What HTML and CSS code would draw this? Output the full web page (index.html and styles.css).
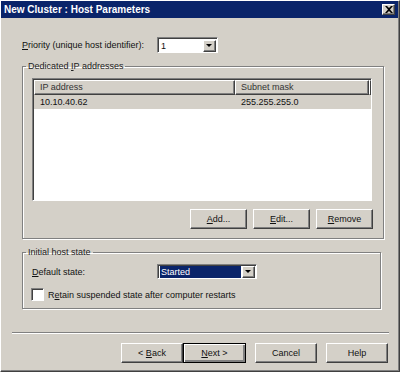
FILE: index.html
```html
<!DOCTYPE html>
<html lang="en">
<head>
    <meta charset="UTF-8">
    <title>New Cluster : Host Parameters</title>
    <link rel="stylesheet" href="styles.css">
</head>
<body>
    <div class="window">
        <div class="titlebar">
            <span class="title">New Cluster : Host Parameters</span>
            <span class="close-btn">
                <svg width="8" height="7" viewBox="0 0 8 7"><path d="M0 0h2l2 2 2-2h2L5 3.5 8 7H6L4 5 2 7H0l3-3.5z" fill="#000"/></svg>
            </span>
        </div>
        <div class="content">
            <div class="field-row priority-row">
                <label class="field-label"><u>P</u>riority (unique host identifier):</label>
                <div class="combo combo-small">
                    <span class="combo-text">1</span>
                    <span class="combo-arrow"></span>
                </div>
            </div>

            <fieldset class="group group-ip">
                <legend>Dedicated <u>I</u>P addresses</legend>
                <div class="listview">
                    <div class="list-header">
                        <div class="col col-ip">IP address</div>
                        <div class="col col-mask">Subnet mask</div>
                        <div class="col col-rest"></div>
                    </div>
                    <div class="list-row selected">
                        <div class="cell col-ip">10.10.40.62</div>
                        <div class="cell col-mask">255.255.255.0</div>
                    </div>
                </div>
                <div class="button-row list-buttons">
                    <button class="btn btn-small"><u>A</u>dd...</button>
                    <button class="btn btn-small"><u>E</u>dit...</button>
                    <button class="btn btn-small"><u>R</u>emove</button>
                </div>
            </fieldset>

            <fieldset class="group group-state">
                <legend>Initial host state</legend>
                <div class="field-row state-row">
                    <label class="field-label state-label"><u>D</u>efault state:</label>
                    <div class="combo combo-wide">
                        <span class="combo-text selected-text">Started</span>
                        <span class="combo-arrow"></span>
                    </div>
                </div>
                <div class="check-row">
                    <span class="checkbox"></span>
                    <span class="check-label">R<u>e</u>tain suspended state after computer restarts</span>
                </div>
            </fieldset>

            <div class="separator"></div>

            <div class="button-row wizard-buttons">
                <button class="btn btn-wide">&lt; <u>B</u>ack</button>
                <button class="btn btn-wide btn-default"><u>N</u>ext &gt;</button>
                <button class="btn btn-wide btn-gap">Cancel</button>
                <button class="btn btn-wide btn-gap">Help</button>
            </div>
        </div>
    </div>
</body>
</html>
```

FILE: styles.css
```css
:root {
    --face: #d4d0c8;
    --shadow: #808080;
    --dark: #404040;
    --navy: #0a246a;
}
* {
    box-sizing: border-box;
}
body {
    margin: 0;
    background: var(--face);
    font-family: 'Liberation Sans', Arial, sans-serif;
    font-size: 9px;
    color: #111;
}
u {
    text-decoration: underline;
    text-underline-offset: 1px;
}
.window {
    width: 400px;
    height: 372px;
    background: var(--face);
    border-style: solid;
    border-width: 1px;
    border-color: #fff var(--dark) var(--dark) #fff;
    box-shadow: inset -1px -1px var(--shadow);
}
.titlebar {
    height: 17px;
    margin-right: 1px;
    background: var(--navy);
    display: flex;
    align-items: center;
    justify-content: space-between;
    padding: 0 3px 0 3px;
}
.title {
    color: #fff;
    font-weight: bold;
    font-size: 10px;
}
.close-btn {
    width: 13px;
    height: 11px;
    background: var(--face);
    border-style: solid;
    border-width: 1px;
    border-color: #fff var(--dark) var(--dark) #fff;
    box-shadow: inset -1px -1px var(--shadow);
    display: flex;
    align-items: center;
    justify-content: center;
    padding-bottom: 1px;
}
.content {
    padding: 0 10px 0 21px;
}
.field-row {
    display: flex;
    align-items: center;
    white-space: nowrap;
}
.priority-row {
    margin-top: 19px;
    height: 16px;
}
.field-label {
    width: 135px;
}
.state-label {
    width: 125px;
}
.combo {
    height: 16px;
    background: #fff;
    border-style: solid;
    border-width: 1px;
    border-color: var(--shadow) #fff #fff var(--shadow);
    box-shadow: inset 1px 1px var(--dark);
    display: flex;
    align-items: center;
    padding: 2px 1px 1px 2px;
}
.combo-small {
    width: 61px;
}
.combo-wide {
    width: 100px;
}
.combo-text {
    flex: 1;
    height: 12px;
    line-height: 12px;
    padding-left: 1px;
}
.selected-text {
    background: var(--navy);
    color: #fff;
    margin-right: 1px;
}
.combo-arrow {
    width: 13px;
    height: 12px;
    background: var(--face);
    border-style: solid;
    border-width: 1px;
    border-color: #fff var(--dark) var(--dark) #fff;
    box-shadow: inset -1px -1px var(--shadow);
    position: relative;
}
.combo-arrow::after {
    content: '';
    position: absolute;
    left: 2px;
    top: 3px;
    border-left: 3px solid transparent;
    border-right: 3px solid transparent;
    border-top: 3px solid #000;
}
.group {
    width: 359px;
    margin: 7px 0 0 0;
    border: 1px solid var(--shadow);
    box-shadow: inset 1px 1px #fff, 1px 1px #fff;
    padding: 5px 11px 9px 9px;
}
.group legend {
    padding: 0 2px;
    margin-left: -6px;
    line-height: 13px;
    color: #222;
}
.listview {
    height: 123px;
    background: #fff;
    border-style: solid;
    border-width: 1px;
    border-color: var(--shadow) #fff #fff var(--shadow);
    box-shadow: inset 1px 1px var(--dark);
    padding: 1px 0 0 1px;
}
.list-header {
    display: flex;
    height: 15px;
}
.col {
    height: 15px;
    line-height: 13px;
    padding-left: 5px;
    background: var(--face);
    color: #333;
    border-style: solid;
    border-width: 1px;
    border-color: #fff var(--dark) var(--dark) #fff;
    box-shadow: inset -1px -1px var(--shadow);
}
.col-ip {
    width: 201px;
}
.col-mask {
    width: 134px;
}
.col-rest {
    flex: 1;
    padding: 0;
}
.list-row {
    display: flex;
    height: 14px;
    line-height: 14px;
}
.list-row.selected {
    background: var(--face);
}
.cell {
    padding-left: 6px;
}
.button-row {
    display: flex;
}
.list-buttons {
    justify-content: flex-end;
    gap: 6px;
    margin-top: 8px;
    margin-right: -1px;
}
.btn {
    height: 20px;
    font-family: inherit;
    font-size: 9px;
    color: #111;
    background: var(--face);
    border-style: solid;
    border-width: 1px;
    border-color: #fff var(--dark) var(--dark) #fff;
    box-shadow: inset -1px -1px var(--shadow);
    padding: 0;
}
.btn-small {
    width: 57px;
}
.btn-wide {
    width: 62px;
}
.btn-default {
    width: 63px;
    border: 1px solid #000;
    box-shadow: inset 1px 1px #fff, inset -2px -2px var(--shadow);
}
.btn-gap {
    margin-left: 9px;
}
.group-state {
    padding-bottom: 7px;
}
.state-row {
    height: 15px;
}
.state-row .combo {
    height: 15px;
    padding-top: 1px;
}
.check-row {
    display: flex;
    align-items: center;
    margin-top: 9px;
}
.checkbox {
    width: 13px;
    height: 13px;
    background: #fff;
    border-style: solid;
    border-width: 1px;
    border-color: var(--shadow) #fff #fff var(--shadow);
    box-shadow: inset 1px 1px var(--dark);
    margin-left: -1px;
    margin-right: 4px;
}
.separator {
    margin: 23px 0 0 -10px;
    width: 377px;
    height: 2px;
    border-top: 1px solid var(--shadow);
    border-bottom: 1px solid #fff;
}
.wizard-buttons {
    margin-top: 9px;
    padding-left: 99px;
}
```
